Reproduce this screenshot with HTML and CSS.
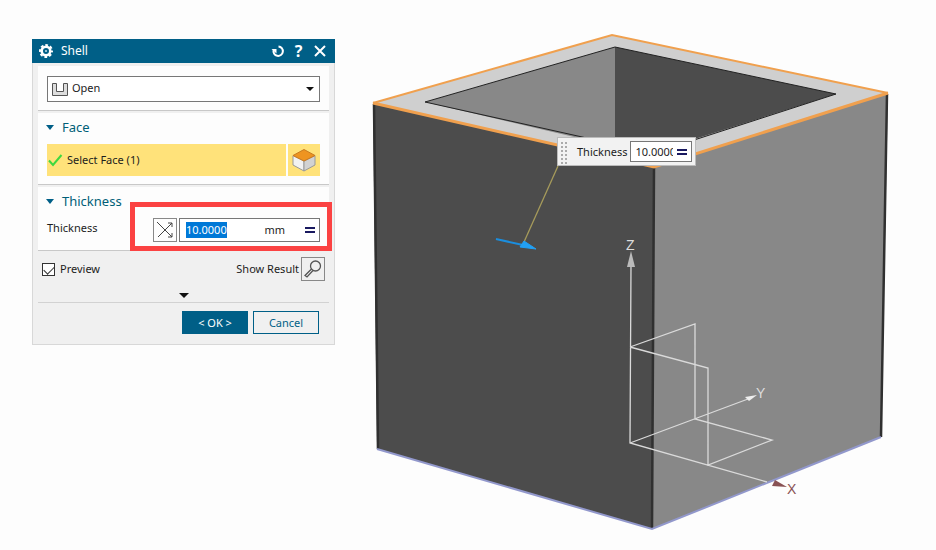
FILE: index.html
```html
<!DOCTYPE html>
<html lang="en">
<head>
<meta charset="utf-8">
<title>Shell</title>
<link rel="stylesheet" href="styles.css">
</head>
<body>
<main class="workspace">
  <form class="dialog" aria-label="Shell">
    <header class="titlebar">
      <svg class="gear" width="16" height="16" viewBox="0 0 16 16" aria-hidden="true"><circle cx="8" cy="8" r="4.3" fill="none" stroke="#fff" stroke-width="2.6"/><circle cx="8" cy="8" r="6" fill="none" stroke="#fff" stroke-width="2" stroke-dasharray="2.7 2.01" stroke-dashoffset="1.35"/><circle cx="8" cy="8" r="1.1" fill="#b9d6e2"/></svg>
      <h1>Shell</h1>
      <button type="button" class="tool" aria-label="Reset"><svg width="14" height="14" viewBox="0 0 14 14"><path d="M7.500 2.500A4.700 4.700 0 1 1 2.600 6" fill="none" stroke="#fff" stroke-width="2"/><path d="M0.500 5H5.500V9.500z" fill="#fff"/></svg></button>
      <button type="button" class="tool help" aria-label="Help">?</button>
      <button type="button" class="tool" aria-label="Close"><svg width="14" height="14" viewBox="0 0 14 14"><path d="M2 2 12 12M12 2 2 12" stroke="#fff" stroke-width="2"/></svg></button>
    </header>
    <div class="content">
      <section class="group type">
        <div class="combo">
          <svg class="open-icon" width="18" height="16" viewBox="0 0 18 16" aria-hidden="true"><path d="M1.500 2.500H5.500V10.500H12.500V2.500H16.500V14.500H1.500z" fill="#ddd" stroke="#555"/></svg>
          <select aria-label="Type"><option>Open</option></select>
          <svg class="arrow" width="8" height="4" viewBox="0 0 8 4" aria-hidden="true"><path d="M0 0H8L4 4z" fill="#111"/></svg>
        </div>
      </section>
      <section class="group face">
        <h2><svg width="8" height="5" viewBox="0 0 8 5" aria-hidden="true"><path d="M0 0H8L4 5z" fill="#005f87"/></svg>Face</h2>
        <div class="face-row">
          <div class="selection"><svg width="16" height="16" viewBox="0 0 16 16" aria-hidden="true"><path d="M2 8.500 6 13 14.500 3" fill="none" stroke="#3fd83f" stroke-width="2"/></svg>Select Face (1)</div>
          <button type="button" class="cube" aria-label="Face rule"><svg width="24" height="24" viewBox="0 0 24 24"><path d="M1 7.500 12 13V23L1 17z" fill="#f2f2f2" stroke="#999"/><path d="M23 7.500 12 13V23L23 17z" fill="#d2d2d2" stroke="#999"/><path d="M12 1.500 23 7.500 12 13 1 7.500z" fill="#ee9420" stroke="#c87a20"/></svg></button>
        </div>
      </section>
      <section class="group thickness">
        <h2><svg width="8" height="5" viewBox="0 0 8 5" aria-hidden="true"><path d="M0 0H8L4 5z" fill="#005f87"/></svg>Thickness</h2>
        <div class="value-row">
          <label for="thickness">Thickness</label>
          <button type="button" class="square" aria-label="Reverse direction"><svg width="20" height="20" viewBox="0 0 20 20"><path d="M2 2 17 17M3 17 17 3M13 3H17V7M17 13V17H13" fill="none" stroke="#444"/></svg></button>
          <div class="field"><input id="thickness" type="text" value="10.0000"><span class="unit">mm</span><button type="button" class="equals" aria-label="Formula"><svg width="10" height="6" viewBox="0 0 10 6"><path d="M0 1H10M0 5H10" stroke="#191960" stroke-width="2"/></svg></button></div>
        </div>
        <div class="highlight"></div>
      </section>
      <div class="preview-row">
        <label class="check"><input type="checkbox" checked>Preview</label>
        <span class="result">Show Result</span>
        <button type="button" class="square" aria-label="Show Result"><svg width="20" height="20" viewBox="0 0 20 20"><circle cx="12.500" cy="7" r="5" fill="none" stroke="#555" stroke-width="1.300"/><path d="M8.500 10 2 16.500 4 18 10 11.500" fill="none" stroke="#555" stroke-width="1.300"/></svg></button>
      </div>
      <div class="more"><svg width="10" height="5" viewBox="0 0 10 5" aria-hidden="true"><path d="M0 0H10L5 5z" fill="#111"/></svg></div>
      <footer class="actions">
        <button type="submit" class="action ok">&lt; OK &gt;</button>
        <button type="button" class="action">Cancel</button>
      </footer>
    </div>
  </form>
  <section class="viewport" aria-label="Model view">
    <svg class="model" viewBox="335 0 601 550" role="img" aria-label="Hollow cube with coordinate axes">
      <path d="M373 103 654 167 652 529 377 449z" fill="#4c4c4c"/>
      <path d="M654 167 888 93 881 437 652 529z" fill="#888"/>
      <path d="M373 103 612 35 888 93 654 167z" fill="#cfcfcf"/>
      <path d="M425 102 615 47V145L600 143z" fill="#888"/>
      <path d="M615 47 836 94 654 152 615 145z" fill="#4c4c4c"/>
      <path d="M654 153 425 102 615 47 836 94z" fill="none" stroke="#222"/>
      <path d="M374 104 378 449M887 94 881 437M654 168 652 529" fill="none" stroke="#303030" stroke-width="2.500"/>
      <path d="M377 449 652 529 881 437" fill="none" stroke="#9298cc" stroke-width="2"/>
      <path d="M373 103 612 35 888 93" fill="none" stroke="#f0a04e" stroke-width="2"/>
      <path d="M373 103 654 167 888 93" fill="none" stroke="#f0a04e" stroke-width="3"/>
      <path d="M558 166 524 242" stroke="#a69b5b" stroke-width="1.300"/>
      <path d="M496 239 523 245" stroke="#1b8ede" stroke-width="2"/>
      <path d="M524 241 536 249 520 247z" fill="#22a0f4" stroke="#22a0f4"/>
      <g fill="none" stroke="#dadada" stroke-width="1.300">
        <path d="M631 265 630 443 767 482M630 443 748 399M630 347 695 324V419L772 440 708 465V368L630 347"/>
      </g>
      <path d="M631 251 635 267H627z" fill="#bbb"/>
      <path d="M757 395 745 397 749 401z" fill="#eee"/>
      <path d="M775 480 787 487 772 486z" fill="#895254"/>
      <g class="axis-labels"><text x="626" y="250">Z</text><text x="756" y="398">Y</text><text class="axis-x" x="787" y="494">X</text></g>
    </svg>
    <div class="floating">
      <svg width="8" height="24" viewBox="0 0 8 24" aria-hidden="true"><path d="M2 2V24M6 2V24" stroke="#aaa" stroke-width="2" stroke-dasharray="2 2"/></svg>
      <label for="live-thickness">Thickness</label>
      <div class="live-field"><input id="live-thickness" type="text" value="10.0000"><button type="button" class="equals" aria-label="Thickness formula"><svg width="10" height="6" viewBox="0 0 10 6"><path d="M0 1H10M0 5H10" stroke="#191960" stroke-width="2"/></svg></button></div>
    </div>
  </section>
</main>
</body>
</html>
```
FILE: styles.css
```css
* { box-sizing: border-box; }
body { margin: 0; background: #fdfdfd; color: #1c1c1c; font: 11px/16px "Noto Sans", sans-serif; }
button, input, select { font: inherit; color: inherit; margin: 0; padding: 0; border: 0; background: none; border-radius: 0; }
h1, h2 { margin: 0; font-weight: 400; }
svg { display: block; flex: none; }
.workspace { display: flex; align-items: flex-start; }
.dialog { flex: 0 0 303px; margin: 39px 0 0 32px; border: 1px solid #d8d8d8; border-top: 0; background: #f0f0f0; }
.titlebar { display: flex; align-items: center; gap: 6px; height: 24px; margin: 0 -1px; padding: 0 8px 0 6px; background: #005f87; color: #fff; }
.titlebar h1 { flex: 1; margin-left: 1px; font-size: 12px; }
.tool { display: grid; place-items: center; width: 15px; height: 20px; }
.help { font-size: 16px; font-weight: 700; }
.content { padding: 3px 5px 0; }
.group { position: relative; padding: 0 9px; border-bottom: 1px solid #c8c8c8; background: #fdfdfd; }
.type { padding-top: 10px; padding-bottom: 8px; }
.combo { display: grid; align-items: center; height: 26px; border: 1px solid #777; background: #fff; }
.combo > * { grid-area: 1 / 1; }
.combo select { appearance: none; width: 100%; height: 24px; padding: 0 20px 2px 24px; }
.open-icon { margin-left: 3px; z-index: 1; }
.arrow { justify-self: end; margin-right: 5px; }
.group h2 { display: flex; align-items: center; gap: 8px; margin-left: -1px; color: #005f78; font-size: 13px; line-height: 18px; }
.face { margin-top: 2px; padding-top: 5px; padding-bottom: 8px; }
.face-row { display: flex; gap: 2px; margin-top: 8px; }
.selection { flex: 1; display: flex; align-items: center; gap: 4px; height: 32px; background: #ffe27a; }
.cube { display: grid; place-items: center; width: 32px; height: 32px; background: #ffe27a; }
.thickness { margin-top: 2px; padding-top: 5px; padding-bottom: 8px; }
.value-row { display: flex; align-items: center; gap: 2px; margin-top: 8px; }
.value-row label { flex: 1; padding-bottom: 4px; }
.square { display: grid; place-items: center; width: 24px; height: 24px; border: 1px solid #888; }
.field { display: flex; align-items: center; width: 141px; height: 24px; padding: 0 4px 0 6px; border: 1px solid #777; background: #fff; }
.field input { width: 41px; height: 16px; background: #0078d7; color: #fff; }
.unit { flex: 1; padding-right: 20px; text-align: right; }
.equals { display: grid; place-items: center; width: 10px; height: 16px; }
.highlight { position: absolute; left: 92px; right: -3px; top: 15px; bottom: -1px; border: 5px solid #fb4242; pointer-events: none; }
.preview-row { display: flex; align-items: center; gap: 2px; padding: 6px 4px 0; }
.check { flex: 1; display: flex; align-items: center; gap: 5px; }
.check input { appearance: none; width: 13px; height: 13px; border: 1px solid #333; background: #fff; }
.check input:checked::after { content: ""; display: block; width: 9px; height: 5px; margin: 2px 1px; border: solid #333; border-width: 0 0 1px 1px; transform: rotate(-45deg); }
.more { display: grid; place-items: center; height: 22px; padding-top: 7px; border-bottom: 1px solid #d2d2d2; }
.actions { display: flex; justify-content: flex-end; gap: 5px; padding: 8px 10px 10px; }
.action { width: 66px; height: 23px; border: 1px solid #005f87; color: #005f87; }
.ok { background: #005f87; color: #fff; }
.viewport { position: relative; flex: 1; min-width: 0; overflow: hidden; }
.model { width: 100%; height: auto; }
.axis-labels { fill: #ddd; font: 14px "Liberation Sans", sans-serif; }
.axis-x { fill: #895254; }
.floating { position: absolute; left: 222px; top: 137px; display: flex; align-items: center; height: 29px; padding: 0 3px 0 2px; border: 1px solid #bbb; background: #f2f2f2; }
.floating label { margin: 0 3px 0 9px; }
.live-field { display: flex; align-items: center; gap: 4px; width: 62px; height: 21px; padding: 0 4px; border: 1px solid #777; background: #fff; }
.live-field input { flex: 1; min-width: 0; height: 16px; }
```
